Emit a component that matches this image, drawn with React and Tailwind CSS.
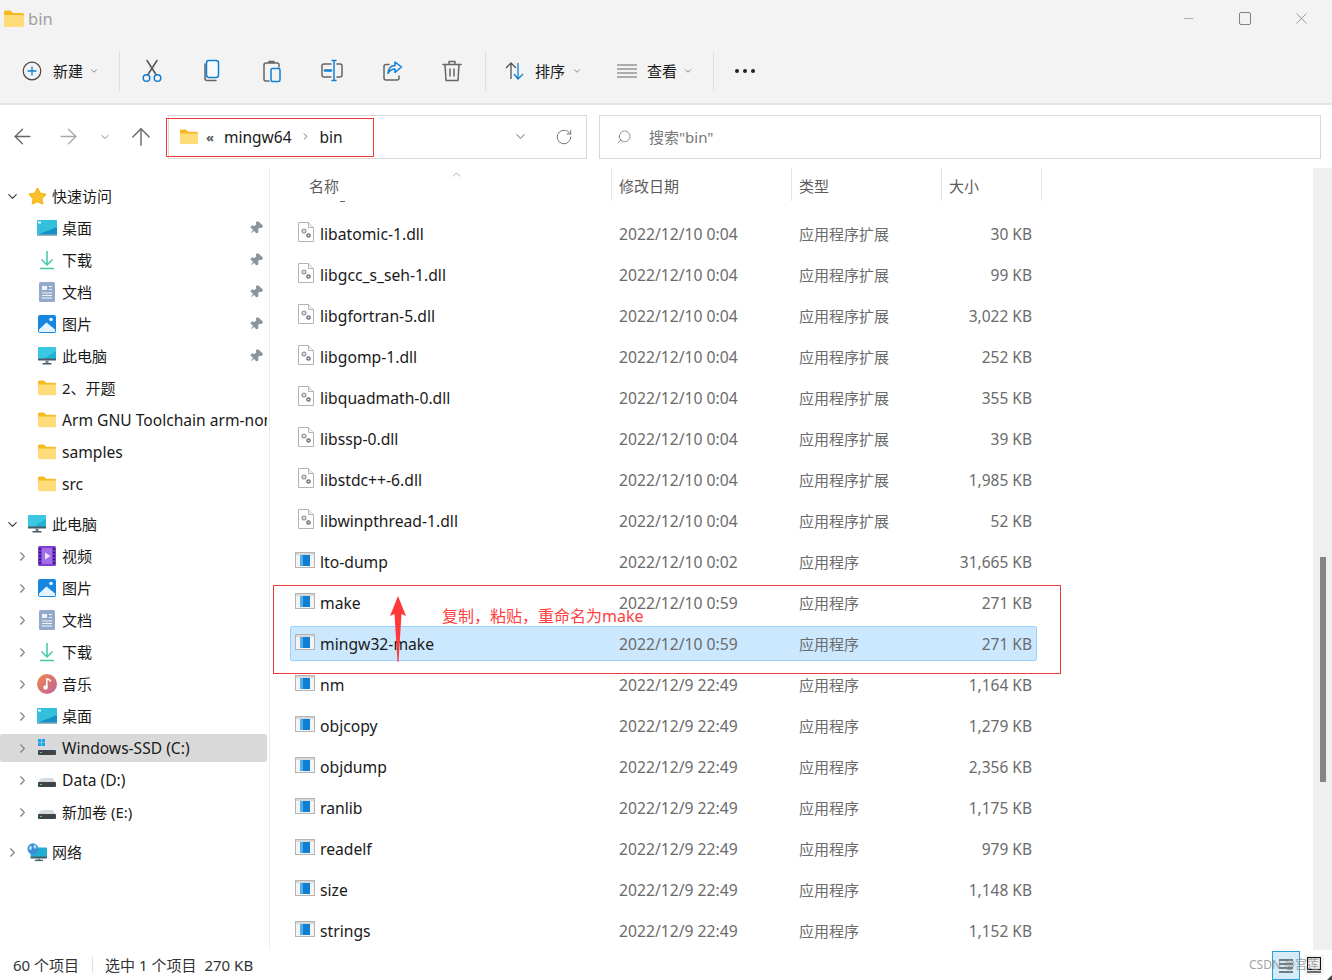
import React from "react";
import { ChevronDown, ChevronRight, ChevronUp, ArrowLeft, ArrowRight, ArrowUp, RotateCw, Search, Pin, Minus, X, Star } from "lucide-react";

const files = [
  ["libatomic-1.dll", "2022/12/10 0:04", "应用程序扩展", "30 KB", "dll"],
  ["libgcc_s_seh-1.dll", "2022/12/10 0:04", "应用程序扩展", "99 KB", "dll"],
  ["libgfortran-5.dll", "2022/12/10 0:04", "应用程序扩展", "3,022 KB", "dll"],
  ["libgomp-1.dll", "2022/12/10 0:04", "应用程序扩展", "252 KB", "dll"],
  ["libquadmath-0.dll", "2022/12/10 0:04", "应用程序扩展", "355 KB", "dll"],
  ["libssp-0.dll", "2022/12/10 0:04", "应用程序扩展", "39 KB", "dll"],
  ["libstdc++-6.dll", "2022/12/10 0:04", "应用程序扩展", "1,985 KB", "dll"],
  ["libwinpthread-1.dll", "2022/12/10 0:04", "应用程序扩展", "52 KB", "dll"],
  ["lto-dump", "2022/12/10 0:02", "应用程序", "31,665 KB", "exe"],
  ["make", "2022/12/10 0:59", "应用程序", "271 KB", "exe"],
  ["mingw32-make", "2022/12/10 0:59", "应用程序", "271 KB", "exe"],
  ["nm", "2022/12/9 22:49", "应用程序", "1,164 KB", "exe"],
  ["objcopy", "2022/12/9 22:49", "应用程序", "1,279 KB", "exe"],
  ["objdump", "2022/12/9 22:49", "应用程序", "2,356 KB", "exe"],
  ["ranlib", "2022/12/9 22:49", "应用程序", "1,175 KB", "exe"],
  ["readelf", "2022/12/9 22:49", "应用程序", "979 KB", "exe"],
  ["size", "2022/12/9 22:49", "应用程序", "1,148 KB", "exe"],
  ["strings", "2022/12/9 22:49", "应用程序", "1,152 KB", "exe"],
];

function FolderIcon({ size = 20 }) {
  return (
    <svg width={size} height={size * 0.85} viewBox="0 0 20 17">
      <path d="M0 2a1.5 1.5 0 0 1 1.5-1.5h5L9 3h9.5A1.500 1.500 0 0 1 20 4.500V6H0z" fill="#f5b921" />
      <path d="M0 5h18.5A1.500 1.500 0 0 1 20 6.500v9a1.500 1.500 0 0 1-1.500 1.500h-17A1.500 1.500 0 0 1 0 15.500z" fill="#ffdc7a" />
    </svg>
  );
}

function DesktopIcon() {
  return (
    <svg width="20" height="16" viewBox="0 0 20 16">
      <rect width="20" height="15" rx="1" fill="#1790c4" />
      <path d="M0 15V1a1 1 0 0 1 1-1h18a1 1 0 0 1 1 1v6z" fill="#3bcbe3" opacity=".8" />
      <rect x="1" y="1.500" width="3" height="2" fill="#e8fbff" />
      <rect y="14.500" width="20" height="1.500" fill="#9bb1bc" />
    </svg>
  );
}

function DownloadIcon() {
  return (
    <svg width="18" height="20" viewBox="0 0 18 20" fill="none" stroke="#45c6a8" strokeWidth="1.5">
      <path d="M9 1v14M3.500 9.500 9 15l5.500-5.500" />
      <path d="M2 18.500h14" />
    </svg>
  );
}

function DocsIcon() {
  return (
    <svg width="16" height="20" viewBox="0 0 16 20">
      <rect width="16" height="20" rx="1.5" fill="#95aac9" />
      <rect x="3" y="4" width="5" height="4" fill="#eef3f9" />
      <path d="M10 4.500h3M10 7.500h3M3 11h10M3 13.500h10M3 16h10" stroke="#eef3f9" strokeWidth="1.2" />
    </svg>
  );
}

function PicsIcon() {
  return (
    <svg width="18" height="18" viewBox="0 0 18 18">
      <rect width="18" height="18" rx="2" fill="#1587e0" />
      <circle cx="13" cy="4.500" r="1.800" fill="#e4f3ff" />
      <path d="M1 17v-2.500L8.500 7.500 17 14.500V17z" fill="#e4f3ff" />
    </svg>
  );
}

function PcIcon() {
  return (
    <svg width="18" height="18" viewBox="0 0 18 18">
      <rect width="18" height="13" rx="1" fill="#20b2d6" />
      <path d="M0 13V1a1 1 0 0 1 1-1h16a1 1 0 0 1 1 1v3L4 13z" fill="#45d0e6" opacity=".7" />
      <rect y="11.500" width="18" height="2" fill="#4a5b66" />
      <rect x="7.500" y="13.500" width="3" height="2.500" fill="#70808a" />
      <rect x="4.500" y="16" width="9" height="1.500" fill="#4a5b66" />
    </svg>
  );
}

function VideoIcon() {
  return (
    <svg width="18" height="20" viewBox="0 0 18 20">
      <rect width="18" height="20" rx="1.5" fill="#7a3fd0" />
      <rect x="4" y="2" width="10" height="16" fill="#a16ee8" />
      <path d="M7 6.500v7l5.500-3.500z" fill="#ece0fb" />
      <path d="M1 3h2M1 6.500h2M1 10h2M1 13.500h2M1 17h2M15 3h2M15 6.500h2M15 10h2M15 13.500h2M15 17h2" stroke="#2b1366" strokeWidth="1.4" />
    </svg>
  );
}

function MusicIcon() {
  return (
    <svg width="20" height="20" viewBox="0 0 20 20">
      <defs>
        <linearGradient id="musicFill" x1="0" y1="0" x2="1" y2="1">
          <stop offset="0" stopColor="#f0884a" />
          <stop offset="1" stopColor="#c0609c" />
        </linearGradient>
      </defs>
      <circle cx="10" cy="10" r="10" fill="url(#musicFill)" />
      <circle cx="8.500" cy="13.500" r="2.200" fill="#fff" />
      <path d="M9.800 13.500V5c1.500 0 3.200.8 3.700 2.500" fill="none" stroke="#fff" strokeWidth="1.5" />
    </svg>
  );
}

function DriveIcon({ win }) {
  return (
    <svg width="18" height="18" viewBox="0 0 18 18">
      {win ? <path d="M0 0h3.200v3.200H0zM3.800 0H7v3.200H3.800zM0 3.800h3.200V7H0zM3.800 3.800H7V7H3.800z" fill="#1aa3e8" /> : null}
      <path d="M2.500 8c.5-.7 1-1 1.500-1h10c.5 0 1 .3 1.500 1l2.500 3.500H0z" fill="#d7dbdf" />
      <rect y="11" width="18" height="5" rx="1" fill="#3f4448" />
      <rect x="2" y="13" width="2" height="1" fill="#5fd05f" />
    </svg>
  );
}

function NetworkIcon() {
  return (
    <svg width="22" height="20" viewBox="0 0 22 20">
      <rect x="4" y="5" width="18" height="12" rx="1" fill="#22aed4" />
      <rect x="4" y="15" width="18" height="2" fill="#4a5b66" />
      <rect x="11.500" y="17" width="3" height="1.500" fill="#70808a" />
      <rect x="8.500" y="18.500" width="9" height="1.500" fill="#4a5b66" />
      <circle cx="6.500" cy="6.500" r="6" fill="#3a8fd8" />
      <path d="M3 3c2 0 3 1 2.500 3S3 8 2 7zM8 1.500c2 1 3 3 2 5-1.500 0-3-1-3-2.500z" fill="#a6dcf5" />
    </svg>
  );
}

function DllIcon() {
  return (
    <svg width="16" height="20" viewBox="0 0 16 20">
      <path d="M.5.500h10l5 5v14H.500z" fill="#fff" stroke="#b4b4b4" />
      <path d="M10.500.500v5h5" fill="#f0f0f0" stroke="#b4b4b4" />
      <circle cx="6" cy="9" r="2.600" fill="#9aa3ab" />
      <circle cx="6" cy="9" r=".9" fill="#fff" />
      <circle cx="10.500" cy="13.500" r="2.300" fill="#6e7880" />
      <circle cx="10.500" cy="13.500" r=".8" fill="#fff" />
    </svg>
  );
}

function ExeIcon() {
  return (
    <svg width="20" height="16" viewBox="0 0 20 16">
      <rect x=".5" y=".5" width="19" height="15" fill="#f4f4f4" stroke="#b4b4b4" />
      <rect x="1" y="1" width="18" height="2" fill="#d8d8d8" />
      <rect x="5" y="3" width="10" height="11" fill="#0f7fd2" />
      <rect x="5" y="3" width="3" height="11" fill="#52aee8" />
    </svg>
  );
}

// one stroke colour for the gray outline, one for the blue accent
function ToolIcon({ children }) {
  return (
    <svg width="22" height="24" viewBox="0 0 22 24" fill="none" strokeWidth="1.5" strokeLinecap="round" strokeLinejoin="round">
      {children}
    </svg>
  );
}

const sideIcon = {
  desktop: <DesktopIcon />,
  download: <DownloadIcon />,
  docs: <DocsIcon />,
  pics: <PicsIcon />,
  pc: <PcIcon />,
  folder: <FolderIcon size={18} />,
  video: <VideoIcon />,
  music: <MusicIcon />,
  ssd: <DriveIcon win />,
  drive: <DriveIcon />,
};

function SideRow({ icon, label, pinned, expand, selected, latin }) {
  return (
    <div className={`h-8 flex items-center ${selected ? "relative" : ""}`}>
      {selected ? <div className="absolute left-0 top-[2px] w-[267px] h-[28px] rounded-[2px] bg-[#d9d9d9]" /> : null}
      <div className="relative w-[37px] pl-[15px] flex items-center">
        {expand ? <ChevronRight size={15} strokeWidth={1.8} className="text-[#808080]" /> : null}
      </div>
      <div className="relative w-[20px] flex justify-center">{sideIcon[icon]}</div>
      <span className={`relative ml-[5px] w-[205px] overflow-hidden whitespace-nowrap text-[#1a1a1a] ${latin ? "text-[15.6px]" : ""}`}>{label}</span>
      {pinned ? <Pin size={14} className="absolute left-[249px] text-[#8c959c] fill-[#8c959c] rotate-45" /> : null}
    </div>
  );
}

function SideHead({ icon, label, open }) {
  return (
    <div className="h-8 flex items-center">
      <div className="w-[27px] pl-[5px] flex items-center">
        {open
          ? <ChevronDown size={15} strokeWidth={1.8} className="text-[#333]" />
          : <ChevronRight size={15} strokeWidth={1.8} className="text-[#808080]" />}
      </div>
      <div className="w-[20px] flex justify-center">{icon}</div>
      <span className="ml-[5px] text-[#1a1a1a]">{label}</span>
    </div>
  );
}

export default function App() {
  return (
    <div
      className="relative w-[1332px] h-[980px] overflow-hidden bg-white flex flex-col text-[15px] leading-[20px]"
      style={{ fontFamily: '"Noto Sans", "Noto Sans CJK SC", sans-serif' }}
    >
      {/* title bar */}
      <div className="h-[37px] bg-[#f3f3f3] flex items-center pl-[4px] pr-[21px]">
        <FolderIcon size={20} />
        <span className="ml-[4px] text-[16.5px] text-[#a0a0a0]">bin</span>
        <div className="ml-auto flex items-center text-[#808080]">
          <Minus size={15} strokeWidth={1} />
          <div className="ml-[43px] w-[12px] h-[13px] rounded-[2px] border border-[#808080]" />
          <X size={19} strokeWidth={1} className="ml-[41px]" />
        </div>
      </div>

      {/* toolbar */}
      <div className="h-[68px] bg-[#f3f3f3] border-b-2 border-[#e5e5e5] flex items-center pt-[2px] text-[#1a1a1a]">
        <div className="w-[120px] h-[40px] border-r border-[#e0e0e0] flex items-center pl-[22px]">
          <svg width="20" height="20" viewBox="0 0 20 20" fill="none">
            <circle cx="10" cy="10" r="8.800" stroke="#444" strokeWidth="1.2" />
            <path d="M10 5.500v9M5.500 10h9" stroke="#0f7fd2" strokeWidth="1.3" />
          </svg>
          <span className="ml-[11px]">新建</span>
          <ChevronDown size={10} className="ml-[6px] text-[#777]" />
        </div>
        <div className="w-[366px] h-[40px] border-r border-[#e0e0e0] flex items-center pl-[21px] gap-[38px]">
          <ToolIcon>
            <path d="M6 1.500 15 15.500M16 1.500 7 15.500" stroke="#555" />
            <circle cx="5.500" cy="19" r="3.300" stroke="#0f7fd2" />
            <circle cx="16.500" cy="19" r="3.300" stroke="#0f7fd2" />
          </ToolIcon>
          <ToolIcon>
            <path d="M4 5v14.500a2 2 0 0 0 2 2h9" stroke="#666" />
            <rect x="5.500" y="1.500" width="12" height="17" rx="2.500" stroke="#0f7fd2" fill="#f7fbff" />
          </ToolIcon>
          <ToolIcon>
            <path d="M8 22H5a2 2 0 0 1-2-2V6a2 2 0 0 1 2-2h11a2 2 0 0 1 2 2v2M8 4V2.500h5V4" stroke="#666" />
            <rect x="10" y="9.500" width="9" height="13" rx="1.500" stroke="#0f7fd2" />
          </ToolIcon>
          <ToolIcon>
            <path d="M10 5H3a2 2 0 0 0-2 2v9a2 2 0 0 0 2 2h7M16 5h3a2 2 0 0 1 2 2v9a2 2 0 0 1-2 2h-3" stroke="#666" />
            <path d="M11 1.500h4M11 21.500h4M13 1.500v20" stroke="#0f7fd2" />
            <path d="M4 11.500h6" stroke="#0f7fd2" strokeWidth="2.5" />
          </ToolIcon>
          <ToolIcon>
            <path d="M8 5.500H5a2 2 0 0 0-2 2V19a2 2 0 0 0 2 2h11a2 2 0 0 0 2-2v-2" stroke="#666" />
            <path d="M14 3v3.500C10 6.500 7.500 9 7 14.500c2-3.500 4-4.500 7-4.500v3.500L20.500 8z" stroke="#0f7fd2" />
          </ToolIcon>
          <ToolIcon>
            <path d="M2 5.500h18M8 5V2.500h6V5M4 5.500l1 16h12l1-16M9 10v7M13 10v7" stroke="#666" />
          </ToolIcon>
        </div>
        <div className="w-[228px] h-[40px] border-r border-[#e0e0e0] flex items-center pl-[19px]">
          <svg width="20" height="20" viewBox="0 0 20 20" fill="none" strokeWidth="1.3">
            <path d="M6 18V2M1 7l5-5 5 5" stroke="#555" />
            <path d="M13 2v16M9 13l4 5 5-5" stroke="#0f7fd2" />
          </svg>
          <span className="ml-[10px]">排序</span>
          <ChevronDown size={10} className="ml-[7px] text-[#777]" />
          <svg className="ml-[35px]" width="20" height="14" viewBox="0 0 20 14" fill="none" stroke="#666" strokeWidth="1.2">
            <path d="M0 1h20M0 5h20M0 9h20M0 13h20" />
          </svg>
          <span className="ml-[10px]">查看</span>
          <ChevronDown size={10} className="ml-[6px] text-[#777]" />
        </div>
        <div className="pl-[21px] flex gap-[4px]">
          <div className="w-[4px] h-[4px] rounded-full bg-[#222]" />
          <div className="w-[4px] h-[4px] rounded-full bg-[#222]" />
          <div className="w-[4px] h-[4px] rounded-full bg-[#222]" />
        </div>
      </div>

      {/* address row */}
      <div className="h-[63px] flex items-center pl-[10px] text-[#666]">
        <ArrowLeft size={25} strokeWidth={1.3} />
        <ArrowRight size={25} strokeWidth={1.3} className="ml-[21px] text-[#aaa]" />
        <ChevronDown size={12} strokeWidth={1.6} className="ml-[18px]" />
        <ArrowUp size={28} strokeWidth={1.2} className="ml-[16px]" />
        <div className="ml-[13px] w-[419px] h-[44px] border border-[#d9d9d9] flex items-center pl-[11px] text-[#1a1a1a]">
          <FolderIcon size={18} />
          <span className="ml-[8px] text-[13px] font-bold text-[#555]">«</span>
          <span className="ml-[10px] text-[15.5px]">mingw64</span>
          <ChevronRight size={11} strokeWidth={2} className="ml-[8px] text-[#666]" />
          <span className="ml-[9px] text-[15.5px]">bin</span>
          <ChevronDown size={15} strokeWidth={1.4} className="ml-auto text-[#555]" />
          <RotateCw size={18} strokeWidth={1.2} className="ml-[27px] mr-[13px] text-[#666]" />
        </div>
        <div className="ml-[12px] w-[722px] h-[44px] border border-[#d9d9d9] flex items-center pl-[16px] text-[#777]">
          <Search size={16} strokeWidth={1.2} className="-scale-x-100" />
          <span className="ml-[17px]">搜索"bin"</span>
        </div>
      </div>

      {/* body */}
      <div className="flex-1 flex min-h-0">
        <nav className="relative w-[270px] border-r border-[#ededed] pt-[12px]">
          <SideHead icon={<Star size={19} className="text-[#f5b921] fill-[#fbc02d]" />} label="快速访问" open />
          <SideRow icon="desktop" label="桌面" pinned />
          <SideRow icon="download" label="下载" pinned />
          <SideRow icon="docs" label="文档" pinned />
          <SideRow icon="pics" label="图片" pinned />
          <SideRow icon="pc" label="此电脑" pinned />
          <SideRow icon="folder" label="2、开题" />
          <SideRow icon="folder" label="Arm GNU Toolchain arm-none-eabi" latin />
          <SideRow icon="folder" label="samples" latin />
          <SideRow icon="folder" label="src" latin />
          <div className="h-2" />
          <SideHead icon={<PcIcon />} label="此电脑" open />
          <SideRow icon="video" label="视频" expand />
          <SideRow icon="pics" label="图片" expand />
          <SideRow icon="docs" label="文档" expand />
          <SideRow icon="download" label="下载" expand />
          <SideRow icon="music" label="音乐" expand />
          <SideRow icon="desktop" label="桌面" expand />
          <SideRow icon="ssd" label="Windows-SSD (C:)" expand selected latin />
          <SideRow icon="drive" label="Data (D:)" expand latin />
          <SideRow icon="drive" label="新加卷 (E:)" expand />
          <div className="h-2" />
          <SideHead icon={<NetworkIcon />} label="网络" />
        </nav>

        <main className="flex-1 flex min-w-0">
          <div className="w-[1043px] pl-[20px]">
            <div className="relative h-[45px] flex text-[#5c5c5c]">
              <div className="w-[321px] pl-[19px] pt-[8px]">名称</div>
              <ChevronUp size={13} strokeWidth={1} className="absolute left-[160px] top-0 text-[#666]" />
              <div className="absolute left-[50px] top-[33px] w-[5px] h-px bg-[#666]" />
              <div className="w-[180px] h-[33px] pl-[7px] pt-[8px] border-l border-[#e5e5e5]">修改日期</div>
              <div className="w-[150px] h-[33px] pl-[7px] pt-[8px] border-l border-[#e5e5e5]">类型</div>
              <div className="w-[101px] h-[33px] pl-[7px] pt-[8px] border-x border-[#e5e5e5]">大小</div>
            </div>
            {files.map(([name, date, type, size, kind]) => {
              const selected = name === "mingw32-make";
              return (
                <div key={name} className="h-[41px] flex items-center">
                  <div className={`w-[747px] h-[35px] flex items-center border rounded-[2px] ${selected ? "bg-[#cce8ff] border-[#99d1ff]" : "border-transparent"}`}>
                    <div className="w-[321px] flex items-center pl-[4px]">
                      <div className={`w-[20px] flex justify-center -mt-[4px] ${kind === "dll" ? "pl-[1px]" : ""}`}>{kind === "dll" ? <DllIcon /> : <ExeIcon />}</div>
                      <span className="ml-[5px] text-[#1a1a1a] text-[15.7px]">{name}</span>
                    </div>
                    <div className="w-[180px] pl-[7px] text-[15.7px] text-[#6b6b6b]">{date}</div>
                    <div className="w-[150px] pl-[7px] text-[#6b6b6b]">{type}</div>
                    <div className="w-[90px] text-right text-[15.5px] text-[#6b6b6b]">{size}</div>
                  </div>
                </div>
              );
            })}
          </div>
          <div className="ml-auto w-[19px] h-[782px] bg-[#efefef] pt-[389px] pl-[7px]">
            <div className="w-[6px] h-[225px] bg-[#858585]" />
          </div>
        </main>
      </div>

      {/* status bar */}
      <div className="absolute left-0 right-0 bottom-0 h-[30px] bg-white flex items-center pl-[13px] text-[#333]">
        <span>60 个项目</span>
        <div className="ml-[13px] w-px h-[16px] bg-[#e0e0e0]" />
        <span className="ml-[12px]">选中 1 个项目</span>
        <span className="ml-[8px]">270 KB</span>
      </div>
      <div className="absolute left-[1272px] top-[951px] w-[28px] h-[29px] border border-[#2c9fd8] bg-[#d5ebf7] flex items-center justify-center">
        <svg width="14" height="14" viewBox="0 0 14 14" stroke="#111" strokeWidth="1.2">
          <path d="M0 1h14M0 5h14M0 9h14M0 13h14" />
        </svg>
      </div>
      <div className="absolute left-[1304px] top-[955px] w-[20px] h-[20px] bg-[#f3f3f3] flex items-center justify-center">
        <svg width="14" height="16" viewBox="0 0 14 16" fill="none" stroke="#111" strokeWidth="1.2">
          <rect x=".5" y=".5" width="13" height="12" />
          <path d="M0 15h14" />
        </svg>
      </div>
      <svg className="absolute left-[1327px] top-[975px]" width="5" height="5" viewBox="0 0 5 5">
        <path d="M5 0v5H0z" fill="#444" />
      </svg>
      <span className="absolute left-[1249px] top-[955px] text-[12px] text-[#8a8a8a]/80">CSDN @宫莲</span>

      {/* red annotations drawn over the screenshot */}
      <div className="absolute left-[166px] top-[118px] w-[208px] h-[39px] border border-[#f03a3a]" />
      <div className="absolute left-[273px] top-[585px] w-[788px] h-[89px] border border-[#f03a3a]" />
      <svg className="absolute left-[390px] top-[596px]" width="16" height="66" viewBox="0 0 16 66">
        <path d="M8 0 16 20 11.500 18 8.500 66H7.500L4.500 18 0 20z" fill="#ff3838" />
      </svg>
      <span className="absolute left-[442px] top-[606px] text-[16px] text-[#ff4040]">复制，粘贴，重命名为make</span>
    </div>
  );
}
